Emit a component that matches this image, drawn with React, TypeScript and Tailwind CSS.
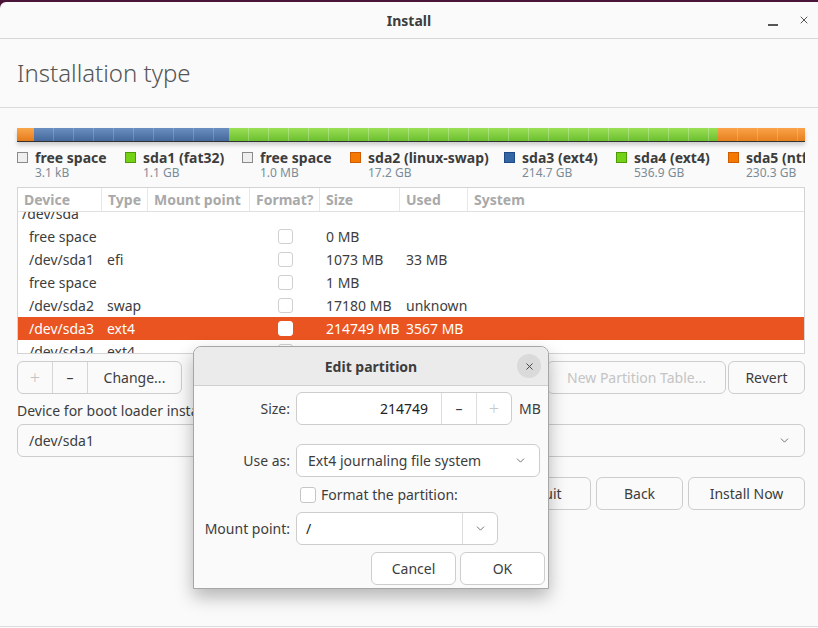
import { ChevronDown, X } from 'lucide-react';

const font = { fontFamily: '"Noto Sans", "DejaVu Sans", sans-serif' };

type Part = { color: string; border: string; label: string; size: string; w: string };

const legend: Part[] = [
  { color: 'bg-[#efefef]', border: 'border-[#8a8a8a]', label: 'free space', size: '3.1 kB', w: 'w-[108px]' },
  { color: 'bg-[#73d216]', border: 'border-[#4e9a06]', label: 'sda1 (fat32)', size: '1.1 GB', w: 'w-[117px]' },
  { color: 'bg-[#efefef]', border: 'border-[#8a8a8a]', label: 'free space', size: '1.0 MB', w: 'w-[108px]' },
  { color: 'bg-[#f57900]', border: 'border-[#ce5c00]', label: 'sda2 (linux-swap)', size: '17.2 GB', w: 'w-[154px]' },
  { color: 'bg-[#3465a4]', border: 'border-[#204a87]', label: 'sda3 (ext4)', size: '214.7 GB', w: 'w-[112px]' },
  { color: 'bg-[#73d216]', border: 'border-[#4e9a06]', label: 'sda4 (ext4)', size: '536.9 GB', w: 'w-[112px]' },
  { color: 'bg-[#f57900]', border: 'border-[#ce5c00]', label: 'sda5 (ntfs)', size: '230.3 GB', w: 'w-[112px]' },
];

const rows = [
  { dev: '/dev/sda', type: '', size: '', used: '', top: true },
  { dev: 'free space', type: '', size: '0 MB', used: '' },
  { dev: '/dev/sda1', type: 'efi', size: '1073 MB', used: '33 MB' },
  { dev: 'free space', type: '', size: '1 MB', used: '' },
  { dev: '/dev/sda2', type: 'swap', size: '17180 MB', used: 'unknown' },
  { dev: '/dev/sda3', type: 'ext4', size: '214749 MB', used: '3567 MB', sel: true },
  { dev: '/dev/sda4', type: 'ext4', size: '', used: '' },
];

const cols = 'grid grid-cols-[84px_46px_102px_70px_80px_68px_1fr]';

const Btn = ({ children, className = '' }: { children: React.ReactNode; className?: string }) => (
  <button className={`h-[33px] rounded-[6px] border border-[#cdcdcd] bg-[#fafafa] text-[14px] text-[#3d3d3d] ${className}`}>
    {children}
  </button>
);

export default function App() {
  return (
    <div style={font} className="w-[818px] h-[628px] overflow-hidden bg-[#4a1538] text-[#3d3d3d]">
      <div className="h-[2px]" />
      <div className="relative h-[626px] rounded-tl-[6px] bg-[#fafafa] flex flex-col">
        {/* title bar */}
        <div className="relative h-[37px] border-b border-[#d6d6d6] flex items-center justify-center">
          <span className="text-[14px] font-bold text-[#3d3d3d]">Install</span>
          <span className="absolute left-[768px] top-[13px] w-[10px] h-[1.5px] mt-[9px] bg-[#555]" />
          <X className="absolute right-[8px] top-[12px] w-[12px] h-[12px] text-[#555]" strokeWidth={2} />
        </div>

        {/* header */}
        <div className="h-[69px] border-b border-[#dadada] flex items-center px-[17px]">
          <h1 className="text-[24px] font-light text-[#555]">Installation type</h1>
        </div>

        <div className="px-[17px] pt-[20px] flex flex-col">
          {/* partition bar */}
          <div className="h-[14px] w-[788px] flex border-b border-[#333] shadow-[0_3px_4px_rgba(0,0,0,0.18)]">
            <div className="w-[17px] h-full bg-gradient-to-b from-[#f9a64a] to-[#e57b18]" />
            <div className="w-[195px] h-full" style={{ backgroundImage: 'repeating-linear-gradient(90deg, transparent 0 19px, rgba(255,255,255,0.18) 19px 20px), linear-gradient(#6a8fc0, #45689a)' }} />
            <div className="w-[489px] h-full" style={{ backgroundImage: 'repeating-linear-gradient(90deg, transparent 0 19px, rgba(255,255,255,0.25) 19px 20px), linear-gradient(#9ae055, #6cbf2e)' }} />
            <div className="flex-1 h-full" style={{ backgroundImage: 'repeating-linear-gradient(90deg, transparent 0 19px, rgba(255,255,255,0.2) 19px 20px), linear-gradient(#fba24a, #e5801e)' }} />
          </div>

          {/* legend */}
          <div className="mt-[7px] w-[788px] h-[33px] flex overflow-hidden whitespace-nowrap">
            {legend.map((p, i) => (
              <div key={i} className={`${p.w} shrink-0 flex flex-col`}>
                <div className="flex items-center h-[17px]">
                  <span className={`w-[11px] h-[11px] border ${p.color} ${p.border}`} />
                  <span className="ml-[7px] text-[14px] font-bold text-[#3d3d3d] leading-[17px]">{p.label}</span>
                </div>
                <span className="ml-[18px] text-[12px] leading-[14px] text-[#7b8c98]">{p.size}</span>
              </div>
            ))}
          </div>

          {/* table */}
          <div className="mt-[5px] w-[788px] h-[167px] border border-[#d4d4d4] flex flex-col bg-white">
            <div className={`${cols} h-[24px] shrink-0 border-b border-[#e0e0e0] text-[14px] font-bold text-[#a9a9a9]`}>
              {['Device', 'Type', 'Mount point', 'Format?', 'Size', 'Used', 'System'].map((h, i) => (
                <div key={h} className={`flex items-center pl-[6px] ${i < 6 ? 'border-r border-[#e8e8e8]' : ''}`}>
                  {h}
                </div>
              ))}
            </div>
            <div className="flex-1 overflow-hidden">
              <div className="-mt-[10px]">
                {rows.map((r, i) => (
                  <div
                    key={i}
                    className={`${cols} h-[23px] items-center text-[14px] ${r.sel ? 'bg-[#e95420] text-white' : 'text-[#3d3d3d]'}`}
                  >
                    <div className={r.top ? 'pl-[4px]' : 'pl-[11px]'}>{r.dev}</div>
                    <div className="pl-[5px]">{r.type}</div>
                    <div />
                    <div className="flex justify-center">
                      {!r.top && (
                        <span className={`w-[15px] h-[15px] rounded-[3px] border ${r.sel ? 'bg-white border-white' : 'bg-white border-[#d0d0d0]'}`} />
                      )}
                    </div>
                    <div className="pl-[6px]">{r.size}</div>
                    <div className="pl-[6px]">{r.used}</div>
                    <div />
                  </div>
                ))}
              </div>
            </div>
          </div>

          {/* partition buttons */}
          <div className="mt-[7px] w-[788px] flex">
            <div className="flex h-[33px] rounded-[6px] border border-[#cdcdcd] text-[14px]">
              <div className="w-[35px] flex items-center justify-center border-r border-[#d6d6d6] text-[#c2c2c2] text-[18px] font-light">+</div>
              <div className="w-[35px] flex items-center justify-center border-r border-[#d6d6d6] text-[#3d3d3d]">–</div>
              <div className="w-[93px] flex items-center justify-center text-[#3d3d3d]">Change...</div>
            </div>
            <div className="flex-1" />
            <Btn className="w-[179px] text-[#c4c4c4]">New Partition Table...</Btn>
            <Btn className="ml-[2px] w-[77px]">Revert</Btn>
          </div>

          <div className="mt-[8px] text-[14px] text-[#3d3d3d] leading-[18px]">Device for boot loader installation:</div>

          <div className="mt-[4px] w-[788px] h-[33px] rounded-[6px] border border-[#cdcdcd] flex items-center pl-[11px] pr-[13px] text-[14px]">
            <span className="flex-1">/dev/sda1</span>
            <ChevronDown className="w-[13px] h-[13px] text-[#555]" strokeWidth={1.5} />
          </div>

          <div className="mt-[20px] w-[788px] flex justify-end gap-[5px]">
            <Btn className="w-[87px]">Quit</Btn>
            <Btn className="w-[87px]">Back</Btn>
            <Btn className="w-[117px]">Install Now</Btn>
          </div>
        </div>

        <div className="absolute left-0 right-0 bottom-0 h-[2px] border-t border-[#dcdcdc]" />

        {/* Edit partition dialog */}
        <div className="absolute left-[193px] top-[344px] w-[356px] h-[243px] rounded-t-[8px] border border-[#a6a6a6] bg-[#fafafa] shadow-[0_8px_18px_rgba(0,0,0,0.28)] flex flex-col">
          <div className="relative h-[39px] shrink-0 rounded-t-[8px] bg-[#ebebeb] border-b border-[#d0d0d0] flex items-center justify-center">
            <span className="text-[14px] font-bold text-[#3d3d3d]">Edit partition</span>
            <span className="absolute right-[7px] top-[7px] w-[24px] h-[24px] rounded-full bg-[#dadada] flex items-center justify-center">
              <X className="w-[11px] h-[11px] text-[#3d3d3d]" strokeWidth={2} />
            </span>
          </div>

          <div className="flex flex-col pl-[9px] pt-[6px] text-[14px]">
            <div className="flex items-center h-[33px]">
              <span className="w-[87px] text-right">Size:</span>
              <div className="ml-[6px] w-[216px] h-[33px] rounded-[6px] border border-[#cdcdcd] bg-white flex">
                <span className="flex-1 flex items-center justify-end pr-[13px] text-[#222]">214749</span>
                <span className="w-[35px] flex items-center justify-center border-l border-[#dedede]">–</span>
                <span className="w-[35px] flex items-center justify-center border-l border-[#dedede] text-[#c8c8c8] text-[18px] font-light">+</span>
              </div>
              <span className="ml-[7px]">MB</span>
            </div>

            <div className="mt-[19px] flex items-center h-[33px]">
              <span className="w-[87px] text-right">Use as:</span>
              <div className="ml-[6px] w-[244px] h-[33px] rounded-[6px] border border-[#cdcdcd] bg-white flex items-center pl-[11px] pr-[12px]">
                <span className="flex-1">Ext4 journaling file system</span>
                <ChevronDown className="w-[13px] h-[13px] text-[#555]" strokeWidth={1.5} />
              </div>
            </div>

            <div className="mt-[9px] h-[17px] flex items-center pl-[97px]">
              <span className="w-[16px] h-[16px] rounded-[3px] border border-[#c6c6c6] bg-white" />
              <span className="ml-[5px]">Format the partition:</span>
            </div>

            <div className="mt-[9px] flex items-center h-[33px]">
              <span className="w-[87px] text-right">Mount point:</span>
              <div className="ml-[6px] w-[202px] h-[33px] rounded-[6px] border border-[#cdcdcd] bg-white flex">
                <span className="flex-1 flex items-center pl-[9px] text-[#222]">/</span>
                <span className="w-[35px] flex items-center justify-center border-l border-[#dedede]">
                  <ChevronDown className="w-[13px] h-[13px] text-[#555]" strokeWidth={1.5} />
                </span>
              </div>
            </div>

            <div className="mt-[7px] flex justify-end gap-[4px] pr-[3px]">
              <Btn className="w-[85px] bg-white">Cancel</Btn>
              <Btn className="w-[85px] bg-white">OK</Btn>
            </div>
          </div>
        </div>
      </div>
    </div>
  );
}
